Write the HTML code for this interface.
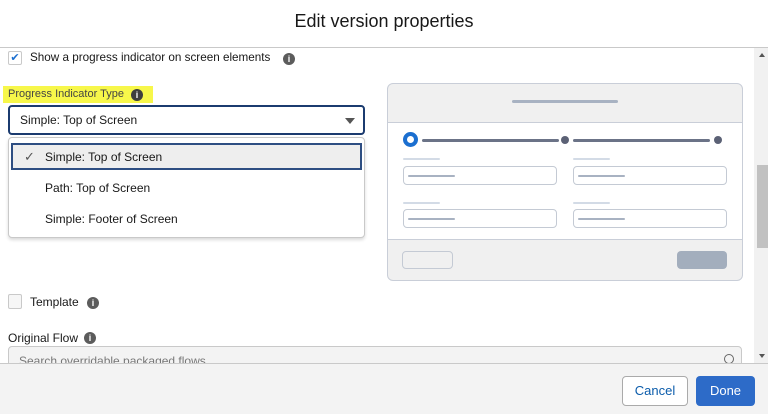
<!DOCTYPE html>
<html><head><style>
*{box-sizing:border-box;margin:0;padding:0}
body{width:768px;height:414px;overflow:hidden;background:#fff;font-family:"Liberation Sans",sans-serif;color:#181818;position:relative}
.a{position:absolute}
.info{position:absolute;width:12px;height:12px;border-radius:50%;background:#5c5c5c;color:#fff;font-size:9px;font-weight:bold;text-align:center;line-height:12px}
.t{font-size:12px;white-space:nowrap}
.bar{position:absolute;height:3px;border-radius:2px}
</style></head><body>
<div class="a" style="left:0;top:0;width:768px;height:48px;background:#fff;border-bottom:1px solid #c9c9c9"></div>
<div class="a" style="left:0;top:11px;width:768px;text-align:center;font-size:18px;color:#181818">Edit version properties</div>

<div class="a" style="left:8px;top:51px;width:14px;height:14px;border:1px solid #c9c9c9;border-radius:2px;color:#1b6fd0;font-size:11px;line-height:12px;text-align:center">✔</div>
<div class="a t" style="left:30px;top:51px;font-size:11.7px">Show a progress indicator on screen elements</div>
<div class="info" style="left:283px;top:53px">i</div>

<div class="a" style="left:3px;top:86px;width:150px;height:17px;background:#f7f74a"></div>
<div class="a t" style="left:8px;top:88px;font-size:11px;color:#444">Progress Indicator Type</div>
<div class="info" style="left:131px;top:89px;background:#3e3e3e">i</div>

<div class="a" style="left:8px;top:105px;width:357px;height:30px;border:2px solid #1b3b6f;border-radius:4px"></div>
<div class="a t" style="left:20px;top:113px">Simple: Top of Screen</div>
<div class="a" style="left:345px;top:118px;width:0;height:0;border-left:5px solid transparent;border-right:5px solid transparent;border-top:6px solid #555"></div>

<div class="a" style="left:8px;top:137px;width:357px;height:101px;border:1px solid #c9c9c9;border-radius:4px;background:#fff;box-shadow:0 2px 3px rgba(0,0,0,.15)"></div>
<div class="a" style="left:11px;top:143px;width:351px;height:27px;background:#eee;border:2px solid #2e4e82"></div>
<div class="a" style="left:24px;top:149px;color:#555;font-size:13px">✓</div>
<div class="a t" style="left:45px;top:150px">Simple: Top of Screen</div>
<div class="a t" style="left:45px;top:181px">Path: Top of Screen</div>
<div class="a t" style="left:45px;top:212px">Simple: Footer of Screen</div>

<div class="a" style="left:387px;top:83px;width:356px;height:198px;border:1px solid #c9ced8;border-radius:6px;background:#f0f0f0;overflow:hidden">
 <div class="a" style="left:0;top:38px;width:356px;height:118px;background:#fff;border-top:1px solid #c9ced8;border-bottom:1px solid #c9ced8"></div>
</div>
<div class="bar" style="left:512px;top:100px;width:106px;background:#a8b2c2"></div>
<div class="a" style="left:403px;top:132px;width:15px;height:15px;border-radius:50%;border:4px solid #1b6fd0;background:#fff"></div>
<div class="bar" style="left:422px;top:139px;width:137px;background:#6b7387"></div>
<div class="a" style="left:561px;top:136px;width:8px;height:8px;border-radius:50%;background:#5b6175"></div>
<div class="bar" style="left:573px;top:139px;width:137px;background:#6b7387"></div>
<div class="a" style="left:714px;top:136px;width:8px;height:8px;border-radius:50%;background:#5b6175"></div>

<div class="bar" style="left:403px;top:158px;width:37px;height:2px;background:#d3dbe6"></div>
<div class="bar" style="left:573px;top:158px;width:37px;height:2px;background:#d3dbe6"></div>
<div class="a" style="left:403px;top:166px;width:154px;height:19px;border:1px solid #c4cad4;border-radius:4px"></div>
<div class="a" style="left:573px;top:166px;width:154px;height:19px;border:1px solid #c4cad4;border-radius:4px"></div>
<div class="bar" style="left:408px;top:175px;width:47px;height:2px;background:#a8b2c2"></div>
<div class="bar" style="left:578px;top:175px;width:47px;height:2px;background:#a8b2c2"></div>
<div class="bar" style="left:403px;top:202px;width:37px;height:2px;background:#d3dbe6"></div>
<div class="bar" style="left:573px;top:202px;width:37px;height:2px;background:#d3dbe6"></div>
<div class="a" style="left:403px;top:209px;width:154px;height:19px;border:1px solid #c4cad4;border-radius:4px"></div>
<div class="a" style="left:573px;top:209px;width:154px;height:19px;border:1px solid #c4cad4;border-radius:4px"></div>
<div class="bar" style="left:408px;top:218px;width:47px;height:2px;background:#a8b2c2"></div>
<div class="bar" style="left:578px;top:218px;width:47px;height:2px;background:#a8b2c2"></div>
<div class="a" style="left:402px;top:251px;width:51px;height:18px;border:1px solid #c4cad4;border-radius:4px"></div>
<div class="a" style="left:677px;top:251px;width:50px;height:18px;background:#a3aebd;border-radius:4px"></div>

<div class="a" style="left:8px;top:294px;width:14px;height:15px;border:1px solid #c9c9c9;border-radius:2px;background:#f6f6f6"></div>
<div class="a t" style="left:30px;top:295px">Template</div>
<div class="info" style="left:87px;top:297px">i</div>
<div class="a t" style="left:8px;top:331px">Original Flow</div>
<div class="info" style="left:84px;top:332px">i</div>
<div class="a" style="left:8px;top:346px;width:734px;height:30px;border:1px solid #c9c9c9;border-radius:4px;background:#f3f3f3"></div>
<div class="a t" style="left:19px;top:354px;color:#777">Search overridable packaged flows</div>
<div class="a" style="left:724px;top:354px;width:10px;height:10px;border:1.5px solid #666;border-radius:50%"></div>

<div class="a" style="left:754px;top:48px;width:14px;height:315px;background:#f1f1f1"></div>
<div class="a" style="left:759px;top:53px;border-left:3px solid transparent;border-right:3px solid transparent;border-bottom:4px solid #555"></div>
<div class="a" style="left:757px;top:165px;width:11px;height:83px;background:#c1c1c1"></div>
<div class="a" style="left:759px;top:354px;border-left:3px solid transparent;border-right:3px solid transparent;border-top:4px solid #555"></div>

<div class="a" style="left:0;top:363px;width:768px;height:51px;background:#f3f3f3;border-top:1px solid #c9c9c9"></div>
<div class="a" style="left:622px;top:376px;width:66px;height:30px;border:1px solid #aaa;border-radius:4px;background:#fff;color:#0b5cab;font-size:13px;text-align:center;line-height:28px">Cancel</div>
<div class="a" style="left:696px;top:376px;width:59px;height:30px;border-radius:4px;background:#2d6bc8;color:#fff;font-size:13px;text-align:center;line-height:30px">Done</div>
</body></html>
